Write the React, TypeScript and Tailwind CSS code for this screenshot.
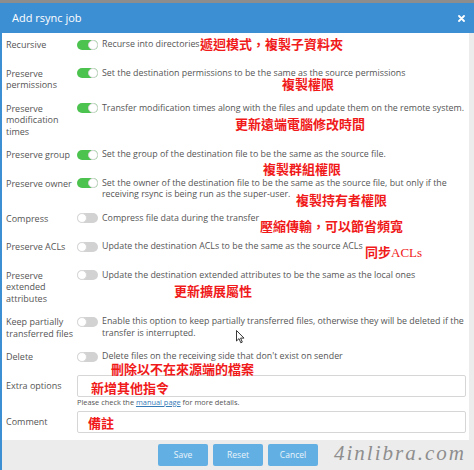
import type { ReactNode } from "react";

type Opt = {
  label: string;
  on: boolean;
  desc: ReactNode;
};

// rsync 옵션 목록
const options: Opt[] = [
  { label: "Recursive", on: true, desc: "Recurse into directories" },
  {
    label: "Preserve permissions",
    on: true,
    desc: "Set the destination permissions to be the same as the source permissions",
  },
  {
    label: "Preserve modification times",
    on: true,
    desc: "Transfer modification times along with the files and update them on the remote system.",
  },
  {
    label: "Preserve group",
    on: true,
    desc: "Set the group of the destination file to be the same as the source file.",
  },
  {
    label: "Preserve owner",
    on: true,
    desc: "Set the owner of the destination file to be the same as the source file, but only if the receiving rsync is being run as the super-user.",
  },
  { label: "Compress", on: false, desc: "Compress file data during the transfer" },
  {
    label: "Preserve ACLs",
    on: false,
    desc: "Update the destination ACLs to be the same as the source ACLs",
  },
  {
    label: "Preserve extended attributes",
    on: false,
    desc: "Update the destination extended attributes to be the same as the local ones",
  },
  {
    label: "Keep partially transferred files",
    on: false,
    desc: "Enable this option to keep partially transferred files, otherwise they will be deleted if the transfer is interrupted.",
  },
  {
    label: "Delete",
    on: false,
    desc: "Delete files on the receiving side that don't exist on sender",
  },
];

// 빨간 주석 (스크린샷 위에 덧씌운 글자)
const notes = [
  { text: "遞迴模式，複製子資料夾", className: "left-[200px] top-[37px]" },
  { text: "複製權限", className: "left-[282px] top-[77px]" },
  { text: "更新遠端電腦修改時間", className: "left-[235px] top-[117px]" },
  { text: "複製群組權限", className: "left-[263px] top-[162px]" },
  { text: "複製持有者權限", className: "left-[296px] top-[193px]" },
  { text: "壓縮傳輸，可以節省頻寬", className: "left-[260px] top-[219px]" },
  { text: "更新擴展屬性", className: "left-[174px] top-[284px]" },
  { text: "刪除以不在來源端的檔案", className: "left-[111px] top-[362px]" },
  { text: "新增其他指令", className: "left-[91px] top-[381px]" },
  { text: "備註", className: "left-[88px] top-[416px]" },
];

const Toggle = ({ on }: { on: boolean }) => (
  <div
    className={
      on
        ? "mt-[0.5px] flex h-[10px] w-[21px] shrink-0 items-center justify-end rounded-full bg-[#4cc24f]"
        : "mt-[0.5px] flex h-[10px] w-[21px] shrink-0 items-center justify-start rounded-full bg-[#d2d2d2]"
    }
  >
    <div className="h-[10px] w-[10px] rounded-full border border-[#d8d8d8] bg-white" />
  </div>
);

const Row = ({ opt }: { opt: Opt }) => (
  <div className="flex min-h-[28.5px] py-[6px] leading-[11.5px]">
    <div className="w-[71px] shrink-0 pr-[3px] text-[9px] text-[#555]">{opt.label}</div>
    <Toggle on={opt.on} />
    <div className="ml-[4px] flex-1 text-[8.85px] text-[#555]">{opt.desc}</div>
  </div>
);

const App = () => {
  return (
    <div
      className="relative h-[470px] w-[474px] overflow-hidden bg-[#8d8d8d] pt-[3px]"
      style={{ fontFamily: '"Open Sans", "Noto Sans CJK TC", sans-serif' }}
    >
      {/* 헤더 */}
      <div className="flex h-[30px] items-center justify-between bg-[#3d8fd3] pl-[12px] pr-[9px]">
        <span className="text-[11px] text-white">Add rsync job</span>
        <svg width="7" height="7" viewBox="0 0 7 7">
          <path d="M1 1L6 6M6 1L1 6" stroke="white" strokeWidth="1.8" strokeLinecap="round" />
        </svg>
      </div>

      {/* 본문 */}
      <div className="flex h-[407px]">
        <div className="w-[2px] shrink-0 bg-[#3d8fd3]" />
        <div className="flex-1 bg-white pl-[4px] pr-[3px]">
          {options.map((opt) => (
            <Row key={opt.label} opt={opt} />
          ))}

          <div className="flex pt-[1px]">
            <div className="flex h-[22px] w-[71px] shrink-0 items-center text-[9px] text-[#555]">
              Extra options
            </div>
            <div className="flex-1">
              <div className="h-[22px] rounded-[2px] border border-[#d6d6d6] bg-white" />
              <div className="mt-[1px] text-[7.4px] leading-[9px] text-[#555]">
                Please check the{" "}
                <span className="text-[#337ab7] underline">manual page</span> for more details.
              </div>
            </div>
          </div>

          <div className="flex pt-[4.5px]">
            <div className="flex h-[22px] w-[71px] shrink-0 items-center text-[9px] text-[#555]">
              Comment
            </div>
            <div className="h-[22px] flex-1 rounded-[2px] border border-[#d6d6d6] bg-white" />
          </div>
        </div>
        <div className="w-[5px] shrink-0 bg-[#ececec]" />
      </div>

      {/* 하단 버튼 */}
      <div className="flex h-[30px] justify-center gap-[5px] border-l-2 border-[#3d8fd3] bg-[#ececec] pt-[4px]">
        {["Save", "Reset", "Cancel"].map((b) => (
          <button
            key={b}
            className="flex h-[22px] w-[50px] items-center justify-center rounded-[2px] bg-[#62b0e3] text-[8.5px] text-[#eaf4fb]"
          >
            {b}
          </button>
        ))}
      </div>

      {/* 주석 */}
      {notes.map((n) => (
        <span
          key={n.text}
          className={`absolute whitespace-nowrap text-[13px] font-bold leading-none text-[#f01a1a] ${n.className}`}
          style={{ fontFamily: '"Noto Sans CJK TC", sans-serif' }}
        >
          {n.text}
        </span>
      ))}
      <span
        className="absolute left-[365px] top-[245px] whitespace-nowrap text-[13px] leading-none text-[#f01a1a]"
        style={{ fontFamily: '"Liberation Serif", "Noto Sans CJK TC", serif' }}
      >
        <span className="font-bold" style={{ fontFamily: '"Noto Sans CJK TC", sans-serif' }}>
          同步
        </span>
        ACLs
      </span>

      {/* 마우스 커서 */}
      <svg className="absolute left-[236px] top-[330px]" width="9" height="14" viewBox="0 0 9 14">
        <path
          d="M0.5 0.5V11L3 8.6L4.8 12.8L6.3 12.1L4.6 8.1H8Z"
          fill="white"
          stroke="#222"
          strokeWidth="0.9"
          strokeLinejoin="round"
        />
      </svg>

      {/* 워터마크 */}
      <span
        className="absolute left-[334px] top-[443px] text-[21px] italic leading-none tracking-[2px] text-[#8e8e8e]"
        style={{ fontFamily: '"Liberation Serif", serif' }}
      >
        4inlibra.com
      </span>
    </div>
  );
};

export default App;
